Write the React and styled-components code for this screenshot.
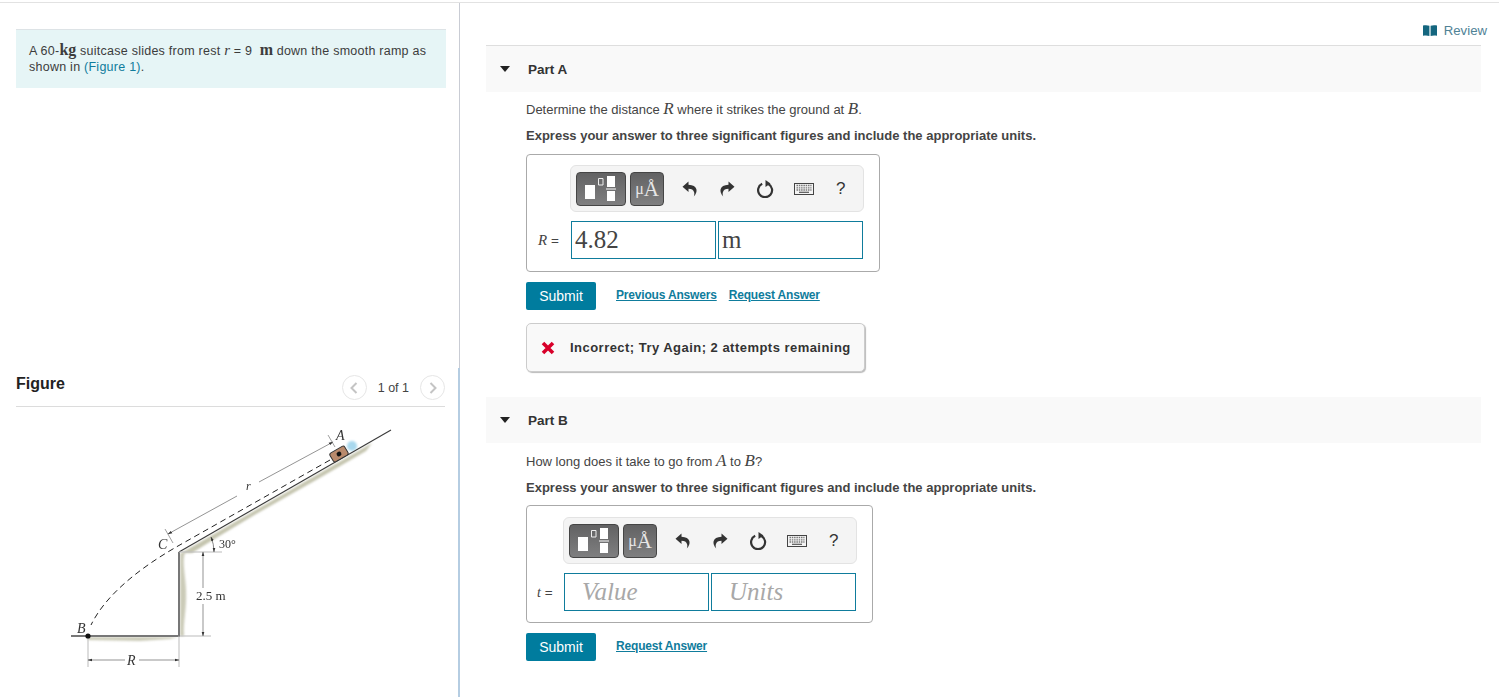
import React from "react";
import styled, { createGlobalStyle } from "styled-components";

const GlobalStyle = createGlobalStyle`
  html, body {
    margin: 0;
    padding: 0;
    background: #fff;
    font-family: "Liberation Sans", Arial, sans-serif;
    color: #3c3c3c;
  }
`;

const Page = styled.div`
  display: flex;
  height: 695px;
  margin-top: 2px;
  border-top: 1px solid #e2e2e2;
  overflow: hidden;
`;

const LeftColumn = styled.div`
  width: 460px;
  flex: none;
  padding-left: 16px;
  box-sizing: border-box;
  border-right: 1px solid #c9ccd4;
`;

const ProblemBox = styled.div`
  width: 430px;
  height: 59px;
  margin-top: 26px;
  padding: 12px 13px 0;
  box-sizing: border-box;
  background: #e6f5f6;
  border-top: 1px solid #dde3e6;
  font-size: 12.5px;
  line-height: 16px;
  letter-spacing: 0.25px;
`;

const Math = styled.span`
  font-family: "Liberation Serif", serif;
  font-size: ${(p) => p.size || 14}px;
  font-style: ${(p) => (p.upright ? "normal" : "italic")};
  line-height: 1;
  letter-spacing: 0;
`;

const TextLink = styled.a`
  color: #0f7c9c;
  text-decoration: none;
`;

const FigureSection = styled.div`
  margin-top: 280px;
  margin-left: -16px;
  margin-right: -1px;
  padding-left: 16px;
  height: 329px;
  border-right: 2px solid #b5cde2;
`;

const FigureHeader = styled.div`
  display: flex;
  align-items: flex-start;
  justify-content: space-between;
  width: 429px;
  height: 39px;
  border-bottom: 1px solid #dcdcdc;
  box-sizing: border-box;
`;

const FigureTitle = styled.h2`
  margin: 6px 0 0;
  font-size: 16px;
  line-height: 20px;
  font-weight: 700;
  color: #222;
`;

const Pager = styled.div`
  display: flex;
  align-items: center;
  gap: 11px;
  margin-top: 7px;
  font-size: 12.5px;
  color: #444;
`;

const PagerButton = styled.span`
  display: flex;
  align-items: center;
  justify-content: center;
  width: 25px;
  height: 25px;
  box-sizing: border-box;
  border: 1px solid #e6e6e6;
  border-radius: 50%;
`;

const RampDrawing = styled.svg`
  display: block;
  margin-left: -16px;
`;

const RightColumn = styled.div`
  flex: 1;
  padding: 0 18px 0 26px;
  min-width: 0;
`;

const ReviewRow = styled.div`
  display: flex;
  align-items: center;
  justify-content: flex-end;
  gap: 7px;
  height: 42px;
  padding: 13px 12px 0 0;
  margin-right: -18px;
  box-sizing: border-box;
  font-size: 13.2px;
  color: #4f8296;
`;

const PartHeader = styled.div`
  display: flex;
  align-items: center;
  height: ${(p) => (p.lined ? 47 : 46)}px;
  box-sizing: border-box;
  padding-left: 14px;
  background: #f9f9f9;
  border-top: ${(p) => (p.lined ? "1px solid #dedede" : "0")};
  font-size: 13.5px;
  font-weight: 700;
  color: #333;
`;

const Caret = styled.span`
  width: 0;
  height: 0;
  margin-right: 18px;
  border-left: 5.5px solid transparent;
  border-right: 5.5px solid transparent;
  border-top: 6px solid #222;
`;

const PartBody = styled.div`
  padding-left: 40px;
`;

const Prompt = styled.p`
  margin: 0;
  padding-top: ${(p) => p.top}px;
  height: 16px;
  font-size: 13px;
  line-height: 16px;
  color: #444;
`;

const Instruction = styled.p`
  margin: 12px 0 0;
  font-size: 13px;
  line-height: 16px;
  font-weight: 700;
  color: #444;
`;

const AnswerBox = styled.div`
  width: ${(p) => p.width}px;
  margin-top: ${(p) => p.top}px;
  padding: ${(p) => p.padTop}px 16px ${(p) => p.padBottom}px ${(p) => p.padLeft}px;
  box-sizing: border-box;
  border: 1px solid #aaa;
  border-radius: 4px;
`;

const Toolbar = styled.div`
  display: flex;
  align-items: center;
  width: 294px;
  height: 47px;
  margin-left: ${(p) => p.offset}px;
  padding-left: 5px;
  box-sizing: border-box;
  background: #f4f4f4;
  border: 1px solid #e3e3e3;
  border-radius: 6px;
`;

const ToolButton = styled.span`
  display: flex;
  align-items: center;
  justify-content: center;
  width: ${(p) => p.width}px;
  height: 34px;
  margin-right: 4px;
  box-sizing: border-box;
  background: linear-gradient(#626263, #7f7f80);
  border: 1px solid #454545;
  border-radius: 4px;
`;

const UnitGlyph = styled.span`
  font-family: "Liberation Serif", serif;
  font-size: ${(p) => p.size}px;
  line-height: 24px;
  color: #e6e6e6;
`;

const ToolIcon = styled.span`
  display: flex;
  align-items: center;
  justify-content: center;
  width: 38.4px;
  height: 24px;
  flex: none;
  margin-left: ${(p) => p.$lead || 0}px;
  font-size: 17px;
  color: #333;
`;

const InputRow = styled.div`
  display: flex;
  align-items: center;
  margin-top: 9px;
`;

const VarLabel = styled.span`
  width: ${(p) => p.width}px;
  flex: none;
  font-size: 13.5px;
  color: #444;
`;

const ValueBox = styled.div`
  width: 145px;
  height: 38px;
  margin-right: 2px;
  padding-left: ${(p) => (p.placeholder ? 17 : 3)}px;
  box-sizing: border-box;
  border: 1px solid #0f7c9c;
  font-family: "Liberation Serif", serif;
  font-size: 25px;
  line-height: 36px;
  font-style: ${(p) => (p.placeholder ? "italic" : "normal")};
  color: ${(p) => (p.placeholder ? "#a8a8a8" : "#444")};
  &:last-child {
    margin-right: 0;
  }
`;

const ActionRow = styled.div`
  display: flex;
  align-items: flex-start;
  margin-top: 10px;
`;

const SubmitButton = styled.button`
  width: 70px;
  height: 28px;
  margin-right: 20px;
  padding: 0;
  border: 0;
  border-radius: 2px;
  background: #007c9e;
  color: #fff;
  font-family: inherit;
  font-size: 14px;
`;

const ActionLink = styled.a`
  margin: 6px 12px 0 0;
  color: #0f7c9c;
  font-size: 12px;
  line-height: 14px;
  font-weight: 700;
  letter-spacing: -0.18px;
  text-decoration: underline;
`;

const Feedback = styled.div`
  display: flex;
  align-items: center;
  gap: 15px;
  width: 339px;
  height: 49px;
  margin: 13px 0 25px;
  padding-left: 14px;
  box-sizing: border-box;
  background: #f9f9f9;
  border: 1px solid #ccc;
  border-radius: 5px;
  box-shadow: 1px 1px 1px #bbb;
  font-size: 13px;
  font-weight: 700;
  letter-spacing: 0.47px;
  color: #333;
`;

const BookIcon = () => (
  <svg width="14" height="11" viewBox="0 0 14 11">
    <path d="M0 .6C2 0 4.500 0 6.400 .8V11C4.500 10.300 2 10.300 0 10.800zM14 .6C12 0 9.500 0 7.600 .8V11c1.900-.7 4.400-.7 6.400-.2z" fill="#15667f" />
  </svg>
);

const Chevron = ({ left }) => (
  <svg width="10" height="14" viewBox="0 0 10 14">
    <path
      d={left ? "M7.5 2 2.5 7l5 5" : "M2.5 2l5 5-5 5"}
      fill="none"
      stroke="#c4c4c4"
      strokeWidth="2"
    />
  </svg>
);

const TemplateGlyph = () => (
  <svg width="32" height="28" viewBox="0 0 32 28">
    <path d="M0 10h10v14H0zM22 1h8v11h-8zM22 16h8v10h-8z" fill="#fff" />
    <path d="M21 13.500h10v1H21z" fill="#fff" />
    <path d="M13.500 3.500h4.500v6.500h-4.500z" fill="none" stroke="#eee" />
  </svg>
);

const UndoIcon = ({ flip }) => (
  <svg
    width="15"
    height="16"
    viewBox="0 0 15 16"
    style={flip ? { transform: "scaleX(-1)" } : undefined}
  >
    <path
      d="M6.5 0.5 0.5 5.8l6 5.2V7.8c3 0 5 .9 5.7 3.6.2 1 .2 2.4-.4 4.1 2.2-2.4 3.2-4.800 2.600-7.200C13.800 5.500 11 4 6.500 3.800z"
      fill="#333"
    />
  </svg>
);

const ResetIcon = () => (
  <svg width="17" height="18" viewBox="0 0 17 18">
    <path d="M5.200 3.800a7 7 0 1 0 6.200 .2" fill="none" stroke="#333" strokeWidth="2.200" />
    <path d="M8.500 0v7l5-3.500z" fill="#333" />
  </svg>
);

const KeyboardIcon = () => (
  <svg width="20" height="12" viewBox="0 0 20 12">
    <rect x="0.500" y="0.500" width="19" height="11" fill="#f4f4f4" stroke="#444" />
    <path
      d="M2.500 2.500h15M2.500 4.800h15M2.500 7h15"
      stroke="#777"
      strokeWidth="1.300"
      strokeDasharray="1.500 0.800"
    />
    <path d="M5 9.300h10" stroke="#555" strokeWidth="1.200" />
  </svg>
);

const EditorToolbar = ({ offset }) => (
  <Toolbar offset={offset}>
    <ToolButton width={50}>
      <TemplateGlyph />
    </ToolButton>
    <ToolButton width={34}>
      <UnitGlyph size={16}>μ</UnitGlyph>
      <UnitGlyph size={21}>Å</UnitGlyph>
    </ToolButton>
    <ToolIcon $lead={2}>
      <UndoIcon />
    </ToolIcon>
    <ToolIcon>
      <UndoIcon flip />
    </ToolIcon>
    <ToolIcon>
      <ResetIcon />
    </ToolIcon>
    <ToolIcon>
      <KeyboardIcon />
    </ToolIcon>
    <ToolIcon $lead={-2}>?</ToolIcon>
  </Toolbar>
);

const FigureLabel = styled.text`
  font-family: "Liberation Serif", serif;
  font-size: ${(p) => p.$size || 14}px;
  font-style: ${(p) => (p.$upright ? "normal" : "italic")};
  fill: #333;
`;

// drawing uses page coordinates shifted by the svg's own top-left
const Ramp = () => (
  <RampDrawing width="445" height="290" viewBox="0 407 445 290">
    <defs>
      <filter id="soft" x="-20%" y="-20%" width="140%" height="140%">
        <feGaussianBlur stdDeviation="1.300" />
      </filter>
      <marker id="tip" markerWidth="7" markerHeight="5" refX="6" refY="2.500" orient="auto-start-reverse">
        <path d="M0 0.500 6.500 2.500 0 4.500z" fill="#333" />
      </marker>
    </defs>

    <g filter="url(#soft)" fill="#b5b59a">
      <path d="M181 553 372 443l-6 8-50 29-60 34-40 24-24 15z" opacity="0.8" />
      <path d="M180 553h5c-3 8 0 20 1 36 1 20-3 32-2 47h-4z" opacity="0.7" />
      <path d="M88 637h90l-8 2-30 2-52-1z" opacity="0.7" />
    </g>
    <ellipse cx="352" cy="446" rx="5" ry="5" fill="#a8d8ee" filter="url(#soft)" />

    <path d="M71 636h108V552" fill="none" stroke="#777" strokeWidth="2" />
    <path d="M179 552 391 430" fill="none" stroke="#3a3a3a" strokeWidth="1.100" />
    <path d="M180 636h31M179 552h43" stroke="#bbb" strokeWidth="1" />
    <path d="M88 636v31M179 636v31" stroke="#bbb" strokeWidth="1" />

    <path
      d="M330 460 178 546C150 562 108 590 91 625"
      fill="none"
      stroke="#222"
      strokeWidth="1"
      strokeDasharray="6 4"
    />

    <path d="M237 496 168 534" stroke="#666" strokeWidth="0.700" markerEnd="url(#tip)" />
    <path d="M259 482 333 442" stroke="#666" strokeWidth="0.700" markerEnd="url(#tip)" />
    <path d="M165 529 173 543M328 435 335 447" stroke="#777" strokeWidth="0.700" />

    <path d="M203 588V552" stroke="#666" strokeWidth="0.700" markerEnd="url(#tip)" />
    <path d="M203 604V636" stroke="#666" strokeWidth="0.700" markerEnd="url(#tip)" />
    <path d="M125 660H88" stroke="#666" strokeWidth="0.700" markerEnd="url(#tip)" />
    <path d="M139 660H179" stroke="#666" strokeWidth="0.700" markerEnd="url(#tip)" />
    <path d="M211 537Q214 544 214 552" fill="none" stroke="#555" strokeWidth="0.700" markerStart="url(#tip)" markerEnd="url(#tip)" />

    <g transform="rotate(-30 339 454)">
      <rect x="330.500" y="449" width="17" height="10" rx="2" fill="#b98a6c" stroke="#333" strokeWidth="1" />
      <circle cx="339" cy="454" r="2.400" fill="#111" />
    </g>
    <circle cx="88" cy="636" r="2.600" fill="#111" />

    <FigureLabel x="336" y="440">A</FigureLabel>
    <FigureLabel x="158" y="549">C</FigureLabel>
    <FigureLabel x="77" y="633">B</FigureLabel>
    <FigureLabel x="246" y="490" $size={12}>r</FigureLabel>
    <FigureLabel x="127" y="665">R</FigureLabel>
    <FigureLabel x="219" y="548" $upright $size={12}>30°</FigureLabel>
    <FigureLabel x="196" y="600" $upright $size={13}>2.5 m</FigureLabel>
  </RampDrawing>
);

export default function App() {
  return (
    <>
      <GlobalStyle />
      <Page>
        <LeftColumn>
          <ProblemBox>
            A 60-<Math upright size={16}><b>kg</b></Math> suitcase slides from rest{" "}
            <Math size={15}>r</Math> = 9 &nbsp;<Math upright size={16}><b>m</b></Math> down the smooth ramp as
            shown in <TextLink>(Figure 1)</TextLink>.
          </ProblemBox>
          <FigureSection>
            <FigureHeader>
              <FigureTitle>Figure</FigureTitle>
              <Pager>
                <PagerButton><Chevron left /></PagerButton>
                1 of 1
                <PagerButton><Chevron /></PagerButton>
              </Pager>
            </FigureHeader>
            <Ramp />
          </FigureSection>
        </LeftColumn>

        <RightColumn>
          <ReviewRow>
            <BookIcon />
            Review
          </ReviewRow>

          <PartHeader lined>
            <Caret />
            Part A
          </PartHeader>
          <PartBody>
            <Prompt top={8}>
              Determine the distance <Math size={17}>R</Math> where it strikes the ground at{" "}
              <Math size={17}>B</Math>.
            </Prompt>
            <Instruction>Express your answer to three significant figures and include the appropriate units.</Instruction>
            <AnswerBox width={354} top={10} padTop={10} padBottom={12} padLeft={11}>
              <EditorToolbar offset={32} />
              <InputRow>
                <VarLabel width={33}><Math size={15}>R</Math> =</VarLabel>
                <ValueBox>4.82</ValueBox>
                <ValueBox>m</ValueBox>
              </InputRow>
            </AnswerBox>
            <ActionRow>
              <SubmitButton>Submit</SubmitButton>
              <ActionLink>Previous Answers</ActionLink>
              <ActionLink>Request Answer</ActionLink>
            </ActionRow>
            <Feedback>
              <svg width="14" height="14" viewBox="0 0 14 14">
                <path d="M2 2 12 12M12 2 2 12" stroke="#d8002a" strokeWidth="3.600" />
              </svg>
              Incorrect; Try Again; 2 attempts remaining
            </Feedback>
          </PartBody>

          <PartHeader>
            <Caret />
            Part B
          </PartHeader>
          <PartBody>
            <Prompt top={9}>
              How long does it take to go from <Math size={17}>A</Math> to <Math size={17}>B</Math>?
            </Prompt>
            <Instruction>Express your answer to three significant figures and include the appropriate units.</Instruction>
            <AnswerBox width={347} top={9} padTop={11} padBottom={11} padLeft={10}>
              <EditorToolbar offset={26} />
              <InputRow>
                <VarLabel width={27}><Math>t</Math> =</VarLabel>
                <ValueBox placeholder>Value</ValueBox>
                <ValueBox placeholder>Units</ValueBox>
              </InputRow>
            </AnswerBox>
            <ActionRow>
              <SubmitButton>Submit</SubmitButton>
              <ActionLink>Request Answer</ActionLink>
            </ActionRow>
          </PartBody>
        </RightColumn>
      </Page>
    </>
  );
}
